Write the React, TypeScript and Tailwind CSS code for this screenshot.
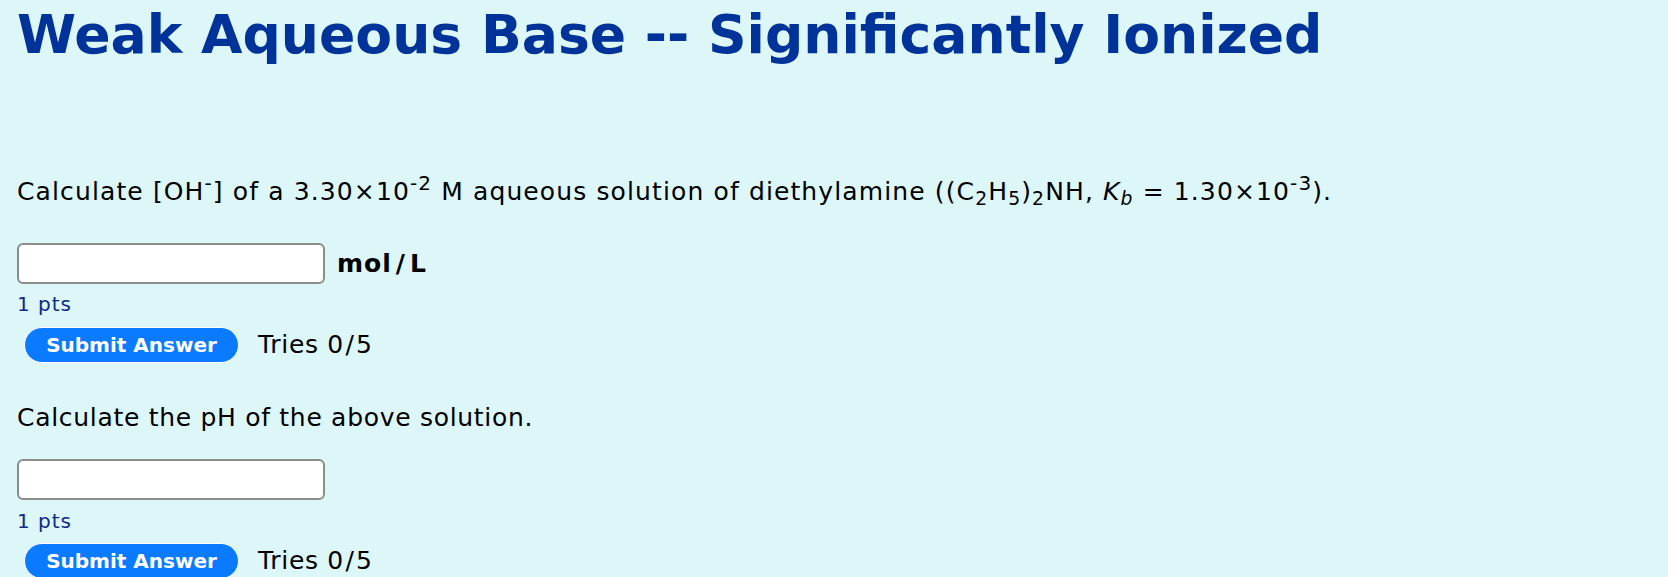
import React from "react";

const font = { fontFamily: '"DejaVu Sans", Verdana, sans-serif' };

function AnswerRow({ unit }: { unit?: boolean }) {
  return (
    <div className="flex items-center">
      <input
        type="text"
        className="h-[41px] w-[308px] rounded-[6px] border-2 border-[#8c8c8c] bg-white px-2 text-[24px] outline-none"
      />
      {unit && (
        <span className="ml-3 text-[25px] font-bold leading-[28px] tracking-[1px] text-black">
          mol<span className="mx-[4px]">/</span>L
        </span>
      )}
    </div>
  );
}

function SubmitRow() {
  return (
    <div className="flex items-center">
      <button
        type="button"
        className="ml-[7px] h-[36px] w-[215px] rounded-full border border-white bg-[#0a7bff] text-[20px] font-bold leading-none text-white"
      >
        Submit Answer
      </button>
      <span className="ml-[19px] text-[25px] leading-[28px] tracking-[0.7px] text-black">
        Tries 0<span className="mx-[1.5px]">/</span>5
      </span>
    </div>
  );
}

export default function App() {
  return (
    <div className="min-h-[577px] w-full bg-[#ddf6f8] pl-[17px]" style={font}>
      <h1 className="pt-[3px] text-[53.6px] font-bold leading-[64px] text-[#003399]">
        Weak Aqueous Base -- Significantly Ionized
      </h1>

      <p className="mt-[111px] text-[25px] leading-[28px] tracking-[1.12px] text-black">
        Calculate [OH<sup className="text-[0.8em]">-</sup>] of a 3.30×10<sup className="text-[0.8em]">-2</sup> M aqueous
        solution of diethylamine ((C<sub>2</sub>H<sub>5</sub>)<sub>2</sub>NH, <i>K</i>
        <sub>
          <i>b</i>
        </sub>{" "}
        = 1.30×10<sup className="text-[0.8em]">-3</sup>).
      </p>

      <div className="mt-[37px]">
        <AnswerRow unit />
      </div>
      <div className="mt-[8px] text-[20px] leading-[24px] tracking-[1px] text-[#0d2b87]">1 pts</div>
      <div className="mt-[11px]">
        <SubmitRow />
      </div>

      <p className="mt-[41px] text-[25px] leading-[28px] tracking-[0.7px] text-black">
        Calculate the pH of the above solution.
      </p>

      <div className="mt-[27px]">
        <AnswerRow />
      </div>
      <div className="mt-[9px] text-[20px] leading-[24px] tracking-[1px] text-[#0d2b87]">1 pts</div>
      <div className="mt-[10px]">
        <SubmitRow />
      </div>
    </div>
  );
}
